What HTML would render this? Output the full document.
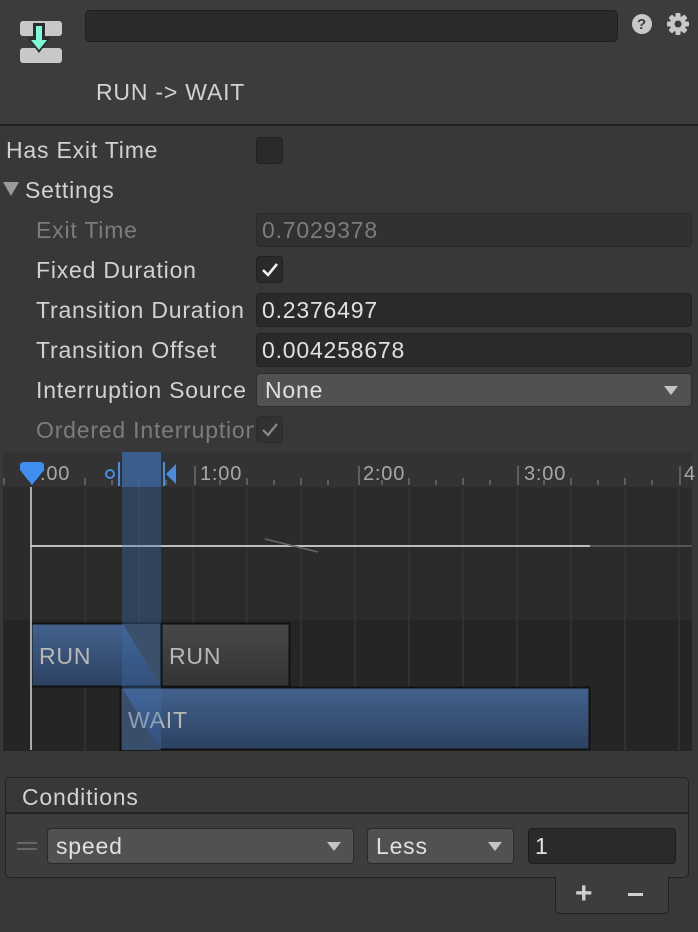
<!DOCTYPE html>
<html><head><style>
*{margin:0;padding:0;box-sizing:border-box}
body{width:698px;height:932px;background:#383838;font-family:"Liberation Sans",sans-serif;color:#d2d2d2;position:relative;overflow:hidden;font-size:23px;letter-spacing:0.8px}
.a{position:absolute}
.lbl{position:absolute;left:36px;height:40px;line-height:40px;white-space:nowrap}
.fld{position:absolute;left:256px;width:436px;height:34px;border-radius:4px;background:#2a2a2a;border:1px solid #212121;line-height:32px;padding-left:5px;color:#e0e0e0}
.cb{position:absolute;left:256px;width:27px;height:27px;border-radius:4px;background:#2a2a2a;border:1px solid #212121}
</style></head><body>
<div class="a" style="left:0;top:0;width:698px;height:124px;background:#3c3c3c"></div>
<div class="a" style="left:0;top:124px;width:698px;height:2px;background:#1f1f1f"></div>
<svg class="a" style="left:18px;top:20px" width="46" height="44" viewBox="0 0 46 44">
<rect x="2" y="1" width="42" height="15" rx="3" fill="#c8c8c8"/>
<rect x="2" y="28" width="42" height="15" rx="3" fill="#c8c8c8"/>
<path d="M15 3 H27 V17 H33 L21 33 L9 17 H15 Z" fill="#2c2c2c"/>
<path d="M18 6 H24 V20 H29 L21 30 L13 20 H18 Z" fill="#7dfbd9"/>
</svg>
<div class="a" style="left:85px;top:10px;width:533px;height:32px;border-radius:5px;background:#2a2a2a;border:1px solid #1e1e1e"></div>
<svg class="a" style="left:631px;top:13px" width="22" height="22" viewBox="0 0 22 22"><circle cx="11" cy="11" r="10" fill="#c8c8c8"/><text x="11" y="16" text-anchor="middle" font-size="15" font-weight="bold" fill="#3c3c3c" font-family="Liberation Sans">?</text></svg>
<svg class="a" style="left:666px;top:12px" width="24" height="24" viewBox="0 0 24 24"><g fill="#c8c8c8"><circle cx="12" cy="12" r="8"/><rect x="9.5" y="1" width="5" height="22" rx="1"/><rect x="1" y="9.5" width="22" height="5" rx="1"/><rect x="9.5" y="1" width="5" height="22" rx="1" transform="rotate(45 12 12)"/><rect x="9.5" y="1" width="5" height="22" rx="1" transform="rotate(-45 12 12)"/></g><circle cx="12" cy="12" r="3.5" fill="#3c3c3c"/></svg>
<div class="a" style="left:96px;top:76px;line-height:32px">RUN -&gt; WAIT</div>

<div class="lbl" style="left:6px;top:130px">Has Exit Time</div>
<div class="cb" style="top:137px"></div>
<div class="a" style="left:3px;top:182px;width:0;height:0;border-left:8px solid transparent;border-right:8px solid transparent;border-top:14px solid #9a9a9a"></div>
<div class="lbl" style="left:25px;top:170px">Settings</div>
<div class="lbl" style="top:210px;color:#7c7c7c">Exit Time</div>
<div class="fld" style="top:213px;color:#7c7c7c;background:#313131;border-color:#2a2a2a">0.7029378</div>
<div class="lbl" style="top:250px">Fixed Duration</div>
<div class="cb" style="top:256px"></div>
<svg class="a" style="left:259px;top:260px" width="22" height="20"><path d="M4 10 L9 15 L18 4" stroke="#f0f0f0" stroke-width="2.6" fill="none"/></svg>
<div class="lbl" style="top:290px">Transition Duration</div>
<div class="fld" style="top:293px">0.2376497</div>
<div class="lbl" style="top:330px">Transition Offset</div>
<div class="fld" style="top:333px">0.004258678</div>
<div class="lbl" style="top:370px">Interruption Source</div>
<div class="fld" style="top:373px;background:#515151;border-color:#2e2e2e;padding-left:8px">None</div>
<div class="a" style="left:664px;top:386px;border-left:7px solid transparent;border-right:7px solid transparent;border-top:9px solid #c4c4c4"></div>
<div class="lbl" style="top:410px;color:#7c7c7c;width:218px;overflow:hidden">Ordered Interruption</div>
<div class="cb" style="top:416px;background:#313131;border-color:#2c2c2c"></div>
<svg class="a" style="left:259px;top:420px" width="22" height="20"><path d="M4 10 L9 15 L18 4" stroke="#8a8a8a" stroke-width="2.2" fill="none"/></svg>

<div class="a" style="left:3px;top:452px;width:689px;height:35px;background:#333"></div>
<div class="a" style="left:3px;top:487px;width:689px;height:133px;background:#2b2b2b"></div>
<div class="a" style="left:3px;top:620px;width:689px;height:131px;background:#252525"></div>
<svg class="a" style="left:0;top:452px" width="698" height="300" style="letter-spacing:0">
<g stroke="#3a3a3a" stroke-width="1">
<line x1="85" y1="35" x2="85" y2="298"/><line x1="139" y1="35" x2="139" y2="298"/><line x1="193" y1="35" x2="193" y2="298"/><line x1="247" y1="35" x2="247" y2="298"/><line x1="301" y1="35" x2="301" y2="298"/><line x1="355" y1="35" x2="355" y2="298"/><line x1="409" y1="35" x2="409" y2="298"/><line x1="463" y1="35" x2="463" y2="298"/><line x1="517" y1="35" x2="517" y2="298"/><line x1="571" y1="35" x2="571" y2="298"/><line x1="625" y1="35" x2="625" y2="298"/><line x1="679" y1="35" x2="679" y2="298"/>
</g>
<g stroke="#8a8a8a" stroke-width="1">
<line x1="4" y1="26" x2="4" y2="33"/><line x1="85" y1="26" x2="85" y2="33"/><line x1="112" y1="28" x2="112" y2="33"/><line x1="139" y1="26" x2="139" y2="33"/><line x1="166" y1="28" x2="166" y2="33"/><line x1="195" y1="14" x2="195" y2="33"/><line x1="220" y1="28" x2="220" y2="33"/><line x1="247" y1="26" x2="247" y2="33"/><line x1="274" y1="28" x2="274" y2="33"/><line x1="301" y1="26" x2="301" y2="33"/><line x1="328" y1="28" x2="328" y2="33"/><line x1="359" y1="14" x2="359" y2="33"/><line x1="382" y1="28" x2="382" y2="33"/><line x1="409" y1="26" x2="409" y2="33"/><line x1="436" y1="28" x2="436" y2="33"/><line x1="463" y1="26" x2="463" y2="33"/><line x1="490" y1="28" x2="490" y2="33"/><line x1="518" y1="14" x2="518" y2="33"/><line x1="544" y1="28" x2="544" y2="33"/><line x1="571" y1="26" x2="571" y2="33"/><line x1="598" y1="28" x2="598" y2="33"/><line x1="625" y1="26" x2="625" y2="33"/><line x1="652" y1="28" x2="652" y2="33"/><line x1="680" y1="14" x2="680" y2="33"/>
</g>
<g fill="#a8a8a8" font-size="20" font-family="Liberation Sans"><text x="40" y="28">:00</text><text x="200" y="28">1:00</text><text x="363" y="28">2:00</text><text x="524" y="28">3:00</text><text x="684" y="28">4</text></g>
<line x1="31" y1="94" x2="590" y2="94" stroke="#bdbdbd" stroke-width="2"/>
<line x1="590" y1="94" x2="692" y2="94" stroke="#555" stroke-width="2"/>
<line x1="265" y1="87" x2="318" y2="100" stroke="#666" stroke-width="1.5"/>
<defs><linearGradient id="bl" x1="0" y1="0" x2="0" y2="1"><stop offset="0" stop-color="#43628c"/><stop offset="1" stop-color="#2c4162"/></linearGradient>
<linearGradient id="gr" x1="0" y1="0" x2="0" y2="1"><stop offset="0" stop-color="#484848"/><stop offset="1" stop-color="#333"/></linearGradient></defs>
<rect x="31.5" y="171.5" width="129" height="63" fill="url(#bl)" stroke="#111" stroke-width="2"/>
<path d="M123 172 L160 172 L160 234 Z" fill="#3a4048"/>
<rect x="161.5" y="171.5" width="128" height="63" fill="url(#gr)" stroke="#111" stroke-width="2"/>
<rect x="120.5" y="235.5" width="469" height="62" fill="url(#bl)" stroke="#111" stroke-width="2"/>
<path d="M122 236 L160 298 L122 298 Z" fill="#363c46"/>
<g fill="#b8b8b8" font-size="23" font-family="Liberation Sans"><text x="39" y="212">RUN</text><text x="169" y="212">RUN</text><text x="128" y="276">WAIT</text></g>
<rect x="122" y="0" width="39" height="298" fill="#3f6fb0" fill-opacity="0.35"/>
<rect x="122" y="0" width="39" height="35" fill="#3d66a0" fill-opacity="0.7"/>
<line x1="31" y1="35" x2="31" y2="298" stroke="#d8d8d8" stroke-width="1.5"/>
<path d="M20 14 Q20 10 24 10 H40 Q44 10 44 14 V18 L32 33 L20 18 Z" fill="#3f8ef0"/>
<circle cx="110" cy="22" r="4" fill="none" stroke="#4a8ae0" stroke-width="2"/><line x1="119" y1="10" x2="119" y2="34" stroke="#4a8ae0" stroke-width="2"/>
<line x1="164" y1="10" x2="164" y2="34" stroke="#4a8ae0" stroke-width="2"/><path d="M166 22 L176 12 V32 Z" fill="#4a8ae0"/>
</svg>

<div class="a" style="left:5px;top:777px;width:684px;height:101px;border:1px solid #222;border-radius:5px;background:#3d3d3d"></div>
<div class="a" style="left:6px;top:778px;width:682px;height:36px;background:#383838;border-bottom:2px solid #232323;border-radius:4px 4px 0 0"></div>
<div class="a" style="left:22px;top:781px;line-height:32px">Conditions</div>
<div class="a" style="left:555px;top:876px;width:114px;height:38px;border:1px solid #222;border-top:none;border-radius:0 0 5px 5px;background:#3d3d3d"></div>
<div class="a" style="left:556px;top:875px;width:112px;height:3px;background:#3d3d3d"></div>
<div class="a" style="left:575px;top:876px;font-size:30px;line-height:36px;font-weight:bold;color:#d0d0d0">+</div>
<div class="a" style="left:628px;top:893px;width:15px;height:3px;background:#d0d0d0"></div>
<div class="a" style="left:17px;top:842px;width:20px;height:2px;background:#666"></div>
<div class="a" style="left:17px;top:848px;width:20px;height:2px;background:#666"></div>
<div class="a" style="left:47px;top:828px;width:307px;height:36px;border-radius:4px;background:#515151;border:1px solid #2a2a2a;line-height:34px;padding-left:8px;color:#e0e0e0">speed</div>
<div class="a" style="left:327px;top:842px;border-left:7px solid transparent;border-right:7px solid transparent;border-top:9px solid #c4c4c4"></div>
<div class="a" style="left:367px;top:828px;width:147px;height:36px;border-radius:4px;background:#515151;border:1px solid #2a2a2a;line-height:34px;padding-left:8px;color:#e0e0e0">Less</div>
<div class="a" style="left:488px;top:842px;border-left:7px solid transparent;border-right:7px solid transparent;border-top:9px solid #c4c4c4"></div>
<div class="a" style="left:528px;top:828px;width:148px;height:36px;border-radius:4px;background:#2a2a2a;border:1px solid #1e1e1e;line-height:34px;padding-left:6px;color:#e0e0e0">1</div>
</body></html>
